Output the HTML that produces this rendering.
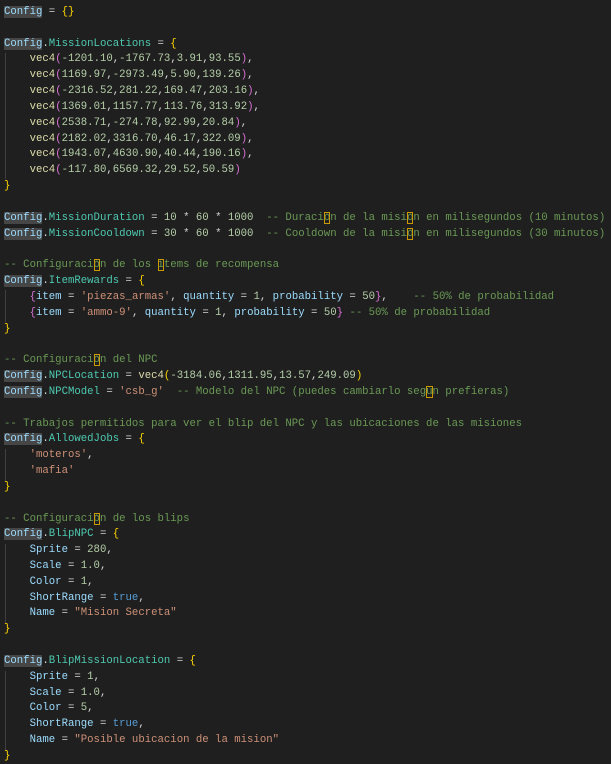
<!DOCTYPE html>
<html><head><meta charset="utf-8"><style>
html,body{margin:0;padding:0;background:#1f1f1f;width:611px;height:764px;overflow:hidden}
pre{margin:0;padding:5px 0 0 4px;font-family:"Liberation Mono",monospace;font-size:10.67px;line-height:15.83px;color:#d4d4d4;position:relative}
.v{color:#9cdcfe}.c{background:#464646;color:#9cdcfe}
.p{color:#4ec9b0}.n{color:#b5cea8}.s{color:#ce9178}.m{color:#6a9955}
.y{color:#ffd700}.q{color:#da70d6}.f{color:#dcdcaa}.b{color:#569cd6}
.u{outline:1px solid #c99a06;outline-offset:-1px}
.g{position:absolute;left:5px;width:1px;background:#404040}
</style></head><body>
<pre><span class="c">Config</span> = <span class="y">{}</span>

<span class="c">Config</span>.<span class="p">MissionLocations</span> = <span class="y">{</span>
    <span class="f">vec4</span><span class="q">(</span><span class="n">-1201.10</span>,<span class="n">-1767.73</span>,<span class="n">3.91</span>,<span class="n">93.55</span><span class="q">)</span>,
    <span class="f">vec4</span><span class="q">(</span><span class="n">1169.97</span>,<span class="n">-2973.49</span>,<span class="n">5.90</span>,<span class="n">139.26</span><span class="q">)</span>,
    <span class="f">vec4</span><span class="q">(</span><span class="n">-2316.52</span>,<span class="n">281.22</span>,<span class="n">169.47</span>,<span class="n">203.16</span><span class="q">)</span>,
    <span class="f">vec4</span><span class="q">(</span><span class="n">1369.01</span>,<span class="n">1157.77</span>,<span class="n">113.76</span>,<span class="n">313.92</span><span class="q">)</span>,
    <span class="f">vec4</span><span class="q">(</span><span class="n">2538.71</span>,<span class="n">-274.78</span>,<span class="n">92.99</span>,<span class="n">20.84</span><span class="q">)</span>,
    <span class="f">vec4</span><span class="q">(</span><span class="n">2182.02</span>,<span class="n">3316.70</span>,<span class="n">46.17</span>,<span class="n">322.09</span><span class="q">)</span>,
    <span class="f">vec4</span><span class="q">(</span><span class="n">1943.07</span>,<span class="n">4630.90</span>,<span class="n">40.44</span>,<span class="n">190.16</span><span class="q">)</span>,
    <span class="f">vec4</span><span class="q">(</span><span class="n">-117.80</span>,<span class="n">6569.32</span>,<span class="n">29.52</span>,<span class="n">50.59</span><span class="q">)</span>
<span class="y">}</span>

<span class="c">Config</span>.<span class="p">MissionDuration</span> = <span class="n">10</span> * <span class="n">60</span> * <span class="n">1000</span>  <span class="m">-- Duraci<span class="u">ó</span>n de la misi<span class="u">ó</span>n en milisegundos (10 minutos)</span>
<span class="c">Config</span>.<span class="p">MissionCooldown</span> = <span class="n">30</span> * <span class="n">60</span> * <span class="n">1000</span>  <span class="m">-- Cooldown de la misi<span class="u">ó</span>n en milisegundos (30 minutos)</span>

<span class="m">-- Configuraci<span class="u">ó</span>n de los <span class="u">í</span>tems de recompensa</span>
<span class="c">Config</span>.<span class="p">ItemRewards</span> = <span class="y">{</span>
    <span class="q">{</span><span class="v">item</span> = <span class="s">'piezas_armas'</span>, <span class="v">quantity</span> = <span class="n">1</span>, <span class="v">probability</span> = <span class="n">50</span><span class="q">}</span>,    <span class="m">-- 50% de probabilidad</span>
    <span class="q">{</span><span class="v">item</span> = <span class="s">'ammo-9'</span>, <span class="v">quantity</span> = <span class="n">1</span>, <span class="v">probability</span> = <span class="n">50</span><span class="q">}</span> <span class="m">-- 50% de probabilidad</span>
<span class="y">}</span>

<span class="m">-- Configuraci<span class="u">ó</span>n del NPC</span>
<span class="c">Config</span>.<span class="p">NPCLocation</span> = <span class="f">vec4</span><span class="y">(</span><span class="n">-3184.06</span>,<span class="n">1311.95</span>,<span class="n">13.57</span>,<span class="n">249.09</span><span class="y">)</span>
<span class="c">Config</span>.<span class="p">NPCModel</span> = <span class="s">'csb_g'</span>  <span class="m">-- Modelo del NPC (puedes cambiarlo seg<span class="u">ú</span>n prefieras)</span>

<span class="m">-- Trabajos permitidos para ver el blip del NPC y las ubicaciones de las misiones</span>
<span class="c">Config</span>.<span class="p">AllowedJobs</span> = <span class="y">{</span>
    <span class="s">'moteros'</span>,
    <span class="s">'mafia'</span>
<span class="y">}</span>

<span class="m">-- Configuraci<span class="u">ó</span>n de los blips</span>
<span class="c">Config</span>.<span class="p">BlipNPC</span> = <span class="y">{</span>
    <span class="v">Sprite</span> = <span class="n">280</span>,
    <span class="v">Scale</span> = <span class="n">1.0</span>,
    <span class="v">Color</span> = <span class="n">1</span>,
    <span class="v">ShortRange</span> = <span class="b">true</span>,
    <span class="v">Name</span> = <span class="s">"Mision Secreta"</span>
<span class="y">}</span>

<span class="c">Config</span>.<span class="p">BlipMissionLocation</span> = <span class="y">{</span>
    <span class="v">Sprite</span> = <span class="n">1</span>,
    <span class="v">Scale</span> = <span class="n">1.0</span>,
    <span class="v">Color</span> = <span class="n">5</span>,
    <span class="v">ShortRange</span> = <span class="b">true</span>,
    <span class="v">Name</span> = <span class="s">"Posible ubicacion de la mision"</span>
<span class="y">}</span><div class="g" style="top:53px;height:126px"></div><div class="g" style="top:290px;height:32px"></div><div class="g" style="top:449px;height:32px"></div><div class="g" style="top:544px;height:79px"></div><div class="g" style="top:671px;height:79px"></div></pre>
</body></html>
